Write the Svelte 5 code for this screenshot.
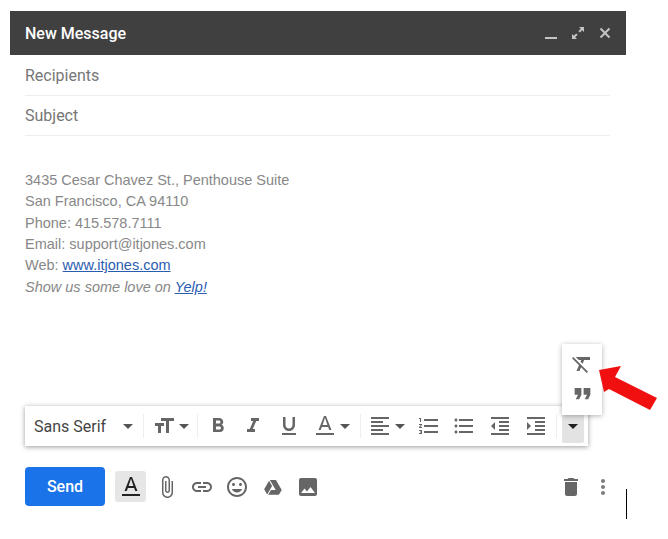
<script>
	const lines = ['3435 Cesar Chavez St., Penthouse Suite', 'San Francisco, CA 94110', 'Phone: 415.578.7111', 'Email: support@itjones.com'];

	const icons = {
		bold: 'M15.6 10.79c.97-.67 1.65-1.77 1.65-2.79 0-2.26-1.75-4-4-4H7v14h7.04c2.09 0 3.71-1.7 3.71-3.79 0-1.52-.86-2.82-2.15-3.42zM10 6.5h3c.83 0 1.5.67 1.5 1.5s-.67 1.5-1.5 1.5h-3v-3zm3.5 9H10v-3h3.5c.83 0 1.5.67 1.5 1.5s-.67 1.5-1.5 1.5z',
		italic: 'M10 4v3h2.21l-3.42 8H6v3h8v-3h-2.21l3.42-8H18V4z',
		underline: 'M12 17c3.31 0 6-2.69 6-6V3h-2.5v8c0 1.93-1.57 3.5-3.5 3.5S8.5 12.93 8.5 11V3H6v8c0 3.31 2.69 6 6 6zm-7 2v2h14v-2H5z',
		size: 'M9 4v3h5v12h3V7h5V4H9zm-6 8h3v7h3v-7h3V9H3v3z',
		color: 'M11 2L5.5 16h2.25l1.12-3h6.25l1.12 3h2.25L13 2h-2zm-1.38 9L12 3.67 14.38 11H9.62zM3 19h18v2H3z',
		align: 'M15 15H3v2h12v-2zm0-8H3v2h12V7zM3 13h18v-2H3v2zm0 8h18v-2H3v2zM3 3v2h18V3H3z',
		numbered: 'M2 17h2v.5H3v1h1v.5H2v1h3v-4H2v1zm1-9h1V4H2v1h1v3zm-1 3h1.8L2 13.1v.9h3v-1H3.2L5 10.9V10H2v1zm5-6v2h14V5H7zm0 14h14v-2H7v2zm0-6h14v-2H7v2z',
		bulleted: 'M4 10.5c-.83 0-1.5.67-1.5 1.5s.67 1.5 1.5 1.5 1.5-.67 1.5-1.5-.67-1.5-1.5-1.5zm0-6c-.83 0-1.5.67-1.5 1.5S3.17 7.5 4 7.5 5.5 6.83 5.5 6 4.83 4.5 4 4.5zm0 12c-.83 0-1.5.68-1.5 1.5s.68 1.5 1.5 1.5 1.5-.68 1.5-1.5-.67-1.5-1.5-1.5zM7 19h14v-2H7v2zm0-6h14v-2H7v2zm0-8v2h14V5H7z',
		outdent: 'M11 17h10v-2H11v2zm-8-5l4 4V8l-4 4zm0 9h18v-2H3v2zM3 3v2h18V3H3zm8 6h10V7H11v2zm0 4h10v-2H11v2z',
		indent: 'M3 21h18v-2H3v2zM3 8v8l4-4-4-4zm8 9h10v-2H11v2zM3 3v2h18V3H3zm8 6h10V7H11v2zm0 4h10v-2H11v2z',
		clear: 'M3.27 5L2 6.27l6.97 6.97L6.5 19h3l1.57-3.66L16.73 21 18 19.73 3.55 5.27 3.27 5zM6 5v.18L8.82 8h2.4l-.72 1.68 2.1 2.1L14.21 8H20V5H6z',
		quote: 'M6 17h3l2-4V7H5v6h3zm8 0h3l2-4V7h-6v6h3z',
		attach: 'M16.5 6v11.5c0 2.21-1.79 4-4 4s-4-1.79-4-4V5c0-1.38 1.12-2.5 2.5-2.5s2.5 1.12 2.5 2.5v10.5c0 .55-.45 1-1 1s-1-.45-1-1V6H10v9.5c0 1.38 1.12 2.5 2.5 2.5s2.5-1.12 2.5-2.5V5c0-2.21-1.79-4-4-4S7 2.79 7 5v12.5c0 3.04 2.46 5.5 5.5 5.5s5.5-2.46 5.5-5.5V6h-1.5z',
		link: 'M3.9 12c0-1.71 1.39-3.1 3.1-3.1h4V7H7c-2.76 0-5 2.24-5 5s2.24 5 5 5h4v-1.9H7c-1.71 0-3.1-1.39-3.1-3.1zM8 13h8v-2H8v2zm9-6h-4v1.9h4c1.71 0 3.1 1.39 3.1 3.1s-1.39 3.1-3.1 3.1h-4V17h4c2.76 0 5-2.24 5-5s-2.24-5-5-5z',
		emoji: 'M11.99 2C6.47 2 2 6.48 2 12s4.47 10 9.99 10C17.52 22 22 17.52 22 12S17.52 2 11.99 2zM12 20c-4.42 0-8-3.58-8-8s3.58-8 8-8 8 3.58 8 8-3.58 8-8 8zm3.5-9c.83 0 1.5-.67 1.5-1.5S16.33 8 15.5 8 14 8.67 14 9.5s.67 1.5 1.5 1.5zm-7 0c.83 0 1.5-.67 1.5-1.5S9.33 8 8.5 8 7 8.67 7 9.5 7.67 11 8.5 11zm3.5 6.5c2.33 0 4.31-1.46 5.11-3.5H6.89c.8 2.04 2.78 3.5 5.11 3.5z',
		drive: 'M8.2 3.5h7.3l7 12h-7.2zM7.2 4.6l3.7 6.2L5 21l-3.6-6.2zM9.6 15.6h12.9L19 21.4H6.2z',
		image: 'M21 19V5c0-1.1-.9-2-2-2H5c-1.1 0-2 .9-2 2v14c0 1.1.9 2 2 2h14c1.1 0 2-.9 2-2zM8.5 13.5l2.5 3.01L14.5 12l4.5 6H5l3.5-4.5z',
		trash: 'M6 19c0 1.1.9 2 2 2h8c1.1 0 2-.9 2-2V7H6v12zM19 4h-3.5l-1-1h-5l-1 1H5v2h14V4z',
		more: 'M12 8c1.1 0 2-.9 2-2s-.9-2-2-2-2 .9-2 2 .9 2 2 2zm0 2c-1.1 0-2 .9-2 2s.9 2 2 2 2-.9 2-2-.9-2-2-2zm0 6c-1.1 0-2 .9-2 2s.9 2 2 2 2-.9 2-2-.9-2-2-2z'
	};
</script>

{#snippet icon(name, size = 24)}
	<svg class="icon" width={size} height={size} viewBox="0 0 24 24"><path d={icons[name]} /></svg>
{/snippet}

{#snippet caret()}
	<svg class="caret" width="10" height="5" viewBox="0 0 10 5"><path d="M0 0h10L5 5z" /></svg>
{/snippet}

<div class="page">
	<div class="compose">
		<header>
			<span class="title">New Message</span>
			<div class="win-btns">
				<svg width="12" height="12" viewBox="0 0 12 12"><rect x="0" y="10" width="12" height="2" /></svg>
				<svg width="14" height="14" viewBox="0 0 14 14"><path d="M8 1h5v5l-1.8-1.8-2.4 2.4-1.4-1.4 2.4-2.4zM6 13H1V8l1.8 1.8 2.4-2.4 1.4 1.4-2.4 2.4z" /></svg>
				<svg width="12" height="12" viewBox="0 0 12 12"><path d="M2.2.8L6 4.6 9.8.8l1.4 1.4L7.4 6l3.8 3.8-1.4 1.4L6 7.4l-3.8 3.8-1.4-1.4L4.6 6 .8 2.2z" /></svg>
			</div>
		</header>

		<div class="field first">Recipients</div>
		<div class="field">Subject</div>

		<div class="body">
			{#each lines as line}
				<div>{line}</div>
			{/each}
			<div>Web: <a href="#web">www.itjones.com</a></div>
			<div class="em">Show us some love on <a href="#yelp">Yelp!</a></div>
		</div>

		<div class="toolbar">
			<div class="font-select"><span>Sans Serif</span>{@render caret()}</div>
			<div class="sep"></div>
			<div class="tb wide">{@render icon('size', 24)}{@render caret()}</div>
			<div class="sep after"></div>
			<div class="tb">{@render icon('bold')}</div>
			<div class="tb">{@render icon('italic')}</div>
			<div class="tb">{@render icon('underline')}</div>
			<div class="tb wide pull">{@render icon('color')}{@render caret()}</div>
			<div class="sep before"></div>
			<div class="tb wide nudge">{@render icon('align')}{@render caret()}</div>
			<div class="tb pull">{@render icon('numbered')}</div>
			<div class="tb tight">{@render icon('bulleted')}</div>
			<div class="tb">{@render icon('outdent')}</div>
			<div class="tb">{@render icon('indent')}</div>
			<div class="sep before"></div>
			<div class="more-btn">{@render caret()}</div>
		</div>

		<div class="actions">
			<button class="send">Send</button>
			<div class="format-btn">{@render icon('color', 24)}</div>
			<div class="act">{@render icon('attach')}</div>
			<div class="act">{@render icon('link')}</div>
			<div class="act">{@render icon('emoji')}</div>
			<div class="act">{@render icon('drive', 20)}</div>
			<div class="act">{@render icon('image')}</div>
			<div class="spacer"></div>
			<div class="act right">{@render icon('trash')}</div>
			<div class="act right dots">{@render icon('more')}</div>
		</div>
	</div>

	<!-- overlays -->
	<div class="popup">
		{@render icon('clear')}
		{@render icon('quote', 27)}
	</div>
	<svg class="arrow" width="62" height="48" viewBox="0 0 62 48"><polygon points="2,7 24,3 18,14 60,35 53,47 12,26 7,29" /></svg>
	<div class="cursor"></div>
</div>

<style>
	:global(body) {
		background: #fff;
		margin: 0;
	}

	.page {
		position: relative;
		width: 668px;
		height: 539px;
		overflow: hidden;
		background: #fff;
		font-family: 'Liberation Sans', Arial, sans-serif;
	}

	.compose {
		display: flex;
		flex-direction: column;
		width: 616px;
		margin-left: 10px;
		padding-top: 11px;
	}

	header {
		display: flex;
		align-items: center;
		justify-content: space-between;
		height: 44px;
		padding: 0 15px;
		background: #404040;
	}

	.title {
		font-family: Roboto, sans-serif;
		font-weight: 500;
		font-size: 16px;
		color: #fff;
	}

	.win-btns {
		display: flex;
		align-items: center;
		gap: 14px;
	}

	.win-btns svg {
		fill: #c4c4c4;
	}

	.field {
		display: flex;
		align-items: center;
		height: 40px;
		margin: 0 16px 0 15px;
		border-bottom: 1px solid #eee;
		box-sizing: border-box;
		font-family: Roboto, sans-serif;
		font-size: 16px;
		color: #767676;
	}

	.field.first {
		height: 41px;
	}

	.body {
		height: 270px;
		box-sizing: border-box;
		padding: 34px 15px 0;
		font-size: 14.5px;
		line-height: 21.35px;
		color: #888;
	}

	.body a {
		color: #2a5db0;
	}

	.em {
		font-style: italic;
	}

	.toolbar {
		display: flex;
		align-items: center;
		width: 563px;
		height: 40px;
		margin-left: 15px;
		background: #fff;
		box-shadow: 0 1px 5px rgba(0, 0, 0, 0.4);
	}

	.font-select {
		display: flex;
		align-items: center;
		justify-content: space-between;
		width: 118px;
		box-sizing: border-box;
		padding: 0 10px 0 9px;
		font-family: Roboto, sans-serif;
		font-size: 16px;
		color: #444;
	}

	.sep {
		width: 1px;
		height: 24px;
		background: #eee;
		flex: none;
	}

	.sep.after {
		margin-right: 2px;
	}

	.sep.before {
		margin-left: 2px;
	}

	.tb {
		display: flex;
		align-items: center;
		justify-content: center;
		width: 35.5px;
		flex: none;
	}

	.tb.wide {
		width: 53px;
		gap: 3px;
	}

	.tb.pull {
		margin-left: -2px;
	}

	.tb.nudge {
		margin-left: -1px;
		margin-right: 1px;
	}

	.tb.tight {
		margin-left: -1px;
		margin-right: 1px;
	}

	.icon {
		fill: #666;
		flex: none;
	}

	.caret {
		fill: #555;
		flex: none;
	}

	.more-btn {
		display: flex;
		align-items: center;
		justify-content: center;
		width: 22px;
		height: 34px;
		margin-left: 5px;
		background: #e3e3e3;
		border-radius: 2px;
	}

	.more-btn .caret {
		fill: #222;
	}

	.actions {
		display: flex;
		align-items: center;
		height: 39px;
		margin-top: 21px;
		padding: 0 7px 0 15px;
	}

	.send {
		width: 80px;
		height: 39px;
		border: none;
		border-radius: 4px;
		background: #1a73e8;
		color: #fff;
		font-family: Roboto, sans-serif;
		font-weight: 500;
		font-size: 16px;
		margin-right: 10px;
	}

	.format-btn {
		display: flex;
		align-items: center;
		justify-content: center;
		width: 31px;
		height: 31px;
		margin-right: 3px;
		background: #e6e6e6;
		border-radius: 3px;
	}

	.format-btn .icon {
		fill: #222;
	}

	.act {
		display: flex;
		align-items: center;
		justify-content: center;
		width: 35.3px;
	}

	.act.right {
		width: 32px;
	}

	.dots .icon {
		fill: #7c7c7c;
	}

	.spacer {
		flex: 1;
	}

	.popup {
		position: absolute;
		left: 562px;
		top: 344px;
		width: 40px;
		height: 71px;
		display: flex;
		flex-direction: column;
		align-items: center;
		justify-content: center;
		gap: 4px;
		background: #fff;
		box-shadow: 0 1px 5px rgba(0, 0, 0, 0.3);
	}

	.arrow {
		position: absolute;
		left: 597px;
		top: 363px;
		fill: #f01010;
	}

	.cursor {
		position: absolute;
		left: 626px;
		top: 489px;
		width: 1px;
		height: 30px;
		background: #000;
	}
</style>
